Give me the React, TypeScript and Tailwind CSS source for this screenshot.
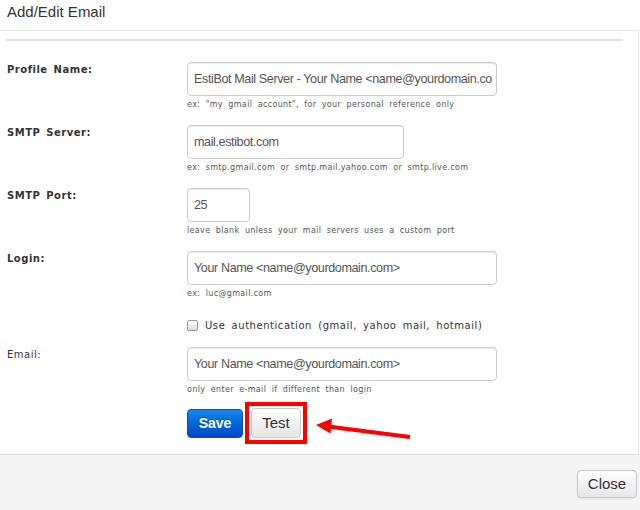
import React from "react";

const labelCls =
  "w-[180px] shrink-0 h-[16px] leading-[16px] text-[10px] text-[#333] tracking-[0.5px] [word-spacing:2px] [font-family:'DejaVu_Sans',sans-serif]";
const inputCls =
  "h-[34px] rounded-[4px] border border-[#cccccc] bg-white px-[6px] flex items-center overflow-hidden whitespace-nowrap text-[12.6px] tracking-[-0.4px] text-[#555] [font-family:'Liberation_Sans',Arial,sans-serif] shadow-[inset_0_1px_1px_rgba(0,0,0,0.075)]";
const helpCls =
  "mt-[3px] h-[12px] leading-[12px] text-[8px] text-[#555] tracking-[0.35px] [word-spacing:2.5px] [font-family:'DejaVu_Sans',sans-serif] whitespace-nowrap";

function Row({
  label,
  bold = true,
  value,
  width,
  help,
}: {
  label: string;
  bold?: boolean;
  value: string;
  width: string;
  help: string;
}) {
  return (
    <div className="flex">
      <div className={labelCls + (bold ? " font-bold" : "")}>{label}</div>
      <div className="flex flex-col">
        <div className={inputCls + " " + width}>{value}</div>
        <div className={helpCls}>{help}</div>
      </div>
    </div>
  );
}

export default function App() {
  return (
    <div className="relative w-[640px] h-[510px] bg-white flex flex-col overflow-hidden [font-family:'Liberation_Sans',Arial,sans-serif]">
      <div className="h-[30px] shrink-0 pl-[7px] pt-[3px] text-[15px] leading-[18px] text-[#333]">
        Add/Edit Email
      </div>
      <div className="flex-1 w-[639px] border-t border-r border-[#e6e6e6] flex flex-col">
        <div className="mt-[8px] ml-[6px] w-[617px] h-[2px] bg-[#e3e3e3]" />
        <div className="mt-[21px] pl-[7px] flex flex-col gap-[14px]">
          <Row
            label="Profile Name:"
            value="EstiBot Mail Server - Your Name <name@yourdomain.co"
            width="w-[310px]"
            help={'ex: "my gmail account", for your personal reference only'}
          />
          <Row
            label="SMTP Server:"
            value="mail.estibot.com"
            width="w-[217px]"
            help="ex: smtp.gmail.com or smtp.mail.yahoo.com or smtp.live.com"
          />
          <Row
            label="SMTP Port:"
            value="25"
            width="w-[63px]"
            help="leave blank unless your mail servers uses a custom port"
          />
          <Row
            label="Login:"
            value="Your Name <name@yourdomain.com>"
            width="w-[310px]"
            help="ex: luc@gmail.com"
          />
        </div>
        <div className="mt-[18px] ml-[187px] flex items-center gap-[7px] h-[14px]">
          <div className="w-[11px] h-[11px] rounded-[2px] border border-[#9a9a9a] bg-gradient-to-b from-white to-[#dcdcdc]" />
          <span className="text-[10px] text-[#333] tracking-[0.55px] [word-spacing:2.5px] [font-family:'DejaVu_Sans',sans-serif]">
            Use authentication (gmail, yahoo mail, hotmail)
          </span>
        </div>
        <div className="mt-[15px] pl-[7px]">
          <Row
            label="Email:"
            bold={false}
            value="Your Name <name@yourdomain.com>"
            width="w-[310px]"
            help="only enter e-mail if different than login"
          />
        </div>
        <div className="mt-[6px] ml-[187px] flex items-center gap-[2px]">
          <button className="w-[56px] h-[29px] rounded-[4px] border border-[#0a4fb8] bg-gradient-to-b from-[#1a86e8] to-[#0046c8] text-white font-bold text-[14px] [text-shadow:0_-1px_0_rgba(0,0,0,0.25)] [font-family:'Liberation_Sans',Arial,sans-serif]">
            Save
          </button>
          <div className="border-[4px] border-[#ff0000] p-[2px]">
            <button className="w-[50px] h-[30px] rounded-[4px] border border-[#c8c8c8] bg-gradient-to-b from-white to-[#e4e4e4] text-[#333] text-[15px] [font-family:'Liberation_Sans',Arial,sans-serif]">
              Test
            </button>
          </div>
        </div>
      </div>
      <div className="h-[56px] shrink-0 border-t border-[#dddddd] bg-[#f5f5f5] flex items-start justify-end pr-[3px] pt-[15px]">
        <button className="w-[60px] h-[28px] rounded-[4px] border border-[#c8c8c8] bg-gradient-to-b from-white to-[#e6e6e6] text-[#333] text-[15px] shadow-[0_1px_2px_rgba(0,0,0,0.08)] [font-family:'Liberation_Sans',Arial,sans-serif]">
          Close
        </button>
      </div>
      <svg
        className="absolute left-0 top-0 pointer-events-none"
        width="640"
        height="510"
        viewBox="0 0 640 510"
      >
        <line x1="410" y1="437" x2="328" y2="426.5" stroke="#ff0000" strokeWidth="4" />
        <polygon points="316,425 332,418.5 330.5,433.5" fill="#ff0000" />
      </svg>
    </div>
  );
}
